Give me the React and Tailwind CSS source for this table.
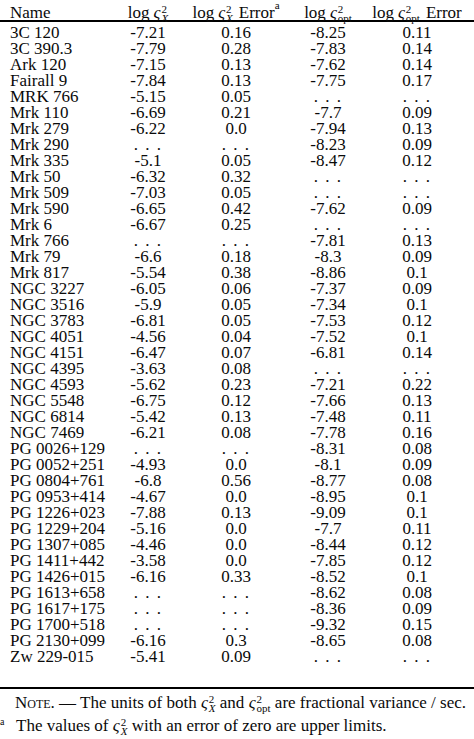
import React from "react";

const rows = [
  ["3C 120", "-7.21", "0.16", "-8.25", "0.11"],
  ["3C 390.3", "-7.79", "0.28", "-7.83", "0.14"],
  ["Ark 120", "-7.15", "0.13", "-7.62", "0.14"],
  ["Fairall 9", "-7.84", "0.13", "-7.75", "0.17"],
  ["MRK 766", "-5.15", "0.05", null, null],
  ["Mrk 110", "-6.69", "0.21", "-7.7", "0.09"],
  ["Mrk 279", "-6.22", "0.0", "-7.94", "0.13"],
  ["Mrk 290", null, null, "-8.23", "0.09"],
  ["Mrk 335", "-5.1", "0.05", "-8.47", "0.12"],
  ["Mrk 50", "-6.32", "0.32", null, null],
  ["Mrk 509", "-7.03", "0.05", null, null],
  ["Mrk 590", "-6.65", "0.42", "-7.62", "0.09"],
  ["Mrk 6", "-6.67", "0.25", null, null],
  ["Mrk 766", null, null, "-7.81", "0.13"],
  ["Mrk 79", "-6.6", "0.18", "-8.3", "0.09"],
  ["Mrk 817", "-5.54", "0.38", "-8.86", "0.1"],
  ["NGC 3227", "-6.05", "0.06", "-7.37", "0.09"],
  ["NGC 3516", "-5.9", "0.05", "-7.34", "0.1"],
  ["NGC 3783", "-6.81", "0.05", "-7.53", "0.12"],
  ["NGC 4051", "-4.56", "0.04", "-7.52", "0.1"],
  ["NGC 4151", "-6.47", "0.07", "-6.81", "0.14"],
  ["NGC 4395", "-3.63", "0.08", null, null],
  ["NGC 4593", "-5.62", "0.23", "-7.21", "0.22"],
  ["NGC 5548", "-6.75", "0.12", "-7.66", "0.13"],
  ["NGC 6814", "-5.42", "0.13", "-7.48", "0.11"],
  ["NGC 7469", "-6.21", "0.08", "-7.78", "0.16"],
  ["PG 0026+129", null, null, "-8.31", "0.08"],
  ["PG 0052+251", "-4.93", "0.0", "-8.1", "0.09"],
  ["PG 0804+761", "-6.8", "0.56", "-8.77", "0.08"],
  ["PG 0953+414", "-4.67", "0.0", "-8.95", "0.1"],
  ["PG 1226+023", "-7.88", "0.13", "-9.09", "0.1"],
  ["PG 1229+204", "-5.16", "0.0", "-7.7", "0.11"],
  ["PG 1307+085", "-4.46", "0.0", "-8.44", "0.12"],
  ["PG 1411+442", "-3.58", "0.0", "-7.85", "0.12"],
  ["PG 1426+015", "-6.16", "0.33", "-8.52", "0.1"],
  ["PG 1613+658", null, null, "-8.62", "0.08"],
  ["PG 1617+175", null, null, "-8.36", "0.09"],
  ["PG 1700+518", null, null, "-9.32", "0.15"],
  ["PG 2130+099", "-6.16", "0.3", "-8.65", "0.08"],
  ["Zw 229-015", "-5.41", "0.09", null, null],
];

const grid = "grid grid-cols-[118px_60px_116px_68px_110px]";

// varsigma with stacked ^2 and _sub, LaTeX style
function Vs({ sub, italicSub }) {
  return (
    <span className="inline-flex items-center">
      <span className="italic">ς</span>
      <span className="inline-flex flex-col text-[11px] leading-[9px] ml-[1px] relative top-[1px]">
        <span>2</span>
        <span className={italicSub ? "italic" : ""}>{sub}</span>
      </span>
    </span>
  );
}

function Cell({ v }) {
  return (
    <div className="text-center whitespace-nowrap">
      {v === null ? <span className="tracking-[1.5px]">. . .</span> : v}
    </div>
  );
}

export default function App() {
  return (
    <div
      className="w-[474px] h-[739px] bg-white text-[#0a0a0a] overflow-hidden"
      style={{ fontFamily: '"Liberation Serif", "DejaVu Serif", serif' }}
    >
      <div className={`${grid} h-[22px] items-center text-[17px] border-b-2 border-black whitespace-nowrap`}>
        <div className="pl-[10px]">Name</div>
        <div className="flex justify-center">
          <span className="mr-[4px]">log</span>
          <Vs sub="X" italicSub />
        </div>
        <div className="flex justify-center items-center">
          <span className="mr-[4px]">log</span>
          <Vs sub="X" italicSub />
          <span className="ml-[6px]">Error</span>
          <span className="text-[11px] leading-[11px] self-start">a</span>
        </div>
        <div className="flex justify-center">
          <span className="mr-[4px]">log</span>
          <Vs sub="opt" />
        </div>
        <div className="flex justify-center">
          <span className="mr-[4px]">log</span>
          <Vs sub="opt" />
          <span className="ml-[6px]">Error</span>
        </div>
      </div>

      <div className="pt-[3px] text-[17px]">
        {rows.map((r) => (
          <div key={r[0]} className={`${grid} h-[16px] leading-[16px]`}>
            <div className="pl-[10px] whitespace-nowrap">{r[0]}</div>
            <Cell v={r[1]} />
            <Cell v={r[2]} />
            <Cell v={r[3]} />
            <Cell v={r[4]} />
          </div>
        ))}
      </div>

      <div className="mt-[22px] border-t-2 border-black" />

      <div className="text-[17px] leading-[16px] whitespace-nowrap">
        <div className="pl-[15px] pt-[5px] flex items-center">
          <span style={{ fontVariant: "small-caps" }}>Note.</span>
          <span>&nbsp;— The units of both&nbsp;</span>
          <Vs sub="X" italicSub />
          <span>&nbsp;and&nbsp;</span>
          <Vs sub="opt" />
          <span>&nbsp;are fractional variance / sec.</span>
        </div>
        <div className="pt-[5px] flex items-center">
          <span className="text-[10px] leading-[10px] w-[16px] self-start">a</span>
          <span>The values of&nbsp;</span>
          <Vs sub="X" italicSub />
          <span>&nbsp;with an error of zero are upper limits.</span>
        </div>
      </div>
    </div>
  );
}
